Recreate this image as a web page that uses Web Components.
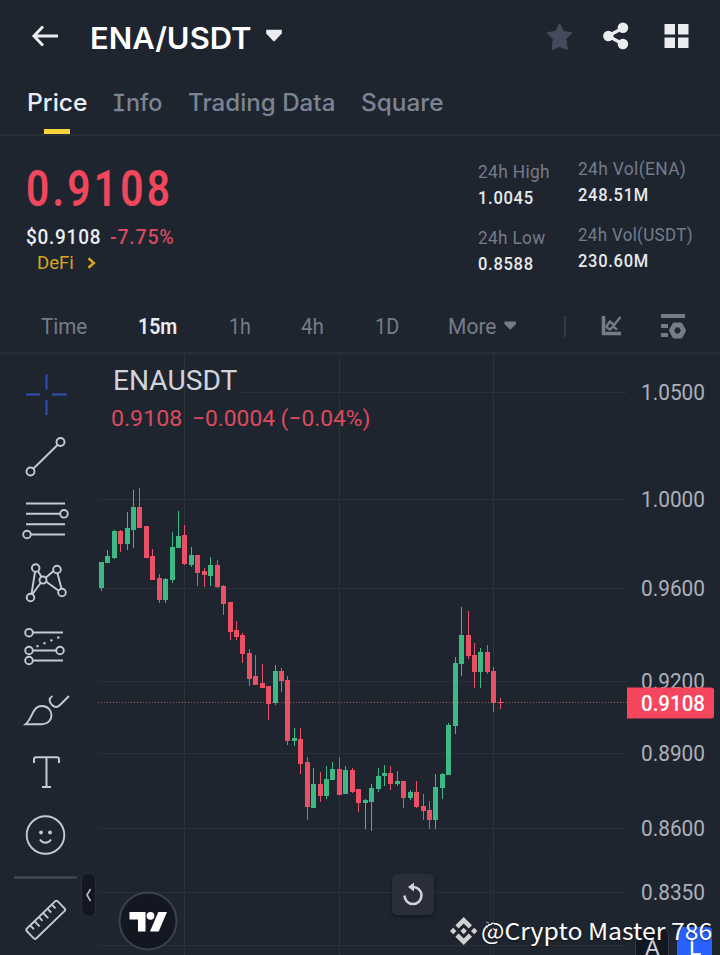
<!DOCTYPE html>
<html lang="en">
<head>
<meta charset="utf-8">
<title>ENA/USDT</title>
<style>
html,body{margin:0;padding:0;background:#1f252f}
body{width:720px;height:955px;overflow:hidden;font-family:Roboto,"Liberation Sans",sans-serif}
</style>
</head>
<body>
<trade-page></trade-page>
<script>
const define = (name, html, init) => {
  const tpl = document.createElement('template');
  tpl.innerHTML = html;
  customElements.define(name, class extends HTMLElement {
    constructor() {
      super();
      this.attachShadow({mode: 'open'}).appendChild(tpl.content.cloneNode(true));
    }
    connectedCallback() { if (init) init(this, this.shadowRoot); }
  });
};

/* One line of text, condensed or widened to the given width. */
define('fit-text', `<style>
:host{display:block;white-space:nowrap;line-height:26px}
span{display:inline-block;transform-origin:0 50%}
</style><span><slot></slot></span>`, (host, root) => {
  const w = +host.getAttribute('w');
  host.style.width = w + 'px';
  host.style.fontSize = host.getAttribute('size') + 'px';
  const span = root.querySelector('span');
  span.style.transform = `scaleX(${w / span.offsetWidth})`;
});

define('page-header', `<style>
:host{display:grid;grid-template-columns:59px 174px 280px 57px 61px 1fr;height:75px;align-items:center;padding-left:31px;box-sizing:border-box}
fit-text{color:#fff;font-family:Inter,sans-serif;font-weight:600}
svg{display:block;margin-bottom:3px}
.caret{margin:0 0 3px}
</style>
<svg width="28" height="24" viewBox="0 0 28 24" fill="none" stroke="#eaecef" stroke-width="3"><path d="M12 2.5L3 12l9 9.5M2.5 12H27"/></svg>
<fit-text size="29.600" w="162">ENA/USDT</fit-text>
<svg class="caret" width="20" height="16" viewBox="0 0 20 16"><path d="M2.200 1.800h15.600v3.600L11 12.800q-1 1-2 0L2.200 5.400z" fill="#eaecef"/></svg>
<svg width="30" height="28" viewBox="0 0 30 28"><path d="M15 2.200l3.500 7.300 8 1-5.900 5.600 1.500 10.100L15 23.200 7.900 26.200l1.500-10.100L3.500 10.500l8-1z" transform="translate(.6 .6)" fill="#434c5b" stroke="#434c5b" stroke-width="2" stroke-linejoin="round"/></svg>
<svg width="32" height="30" viewBox="0 0 32 30" fill="#eaecef"><path d="M22 7L7 15l15 8" fill="none" stroke="#eaecef" stroke-width="3.200"/><circle cx="7.300" cy="15" r="5.200"/><circle cx="21.900" cy="6.800" r="5.300"/><circle cx="21.900" cy="23" r="5.300"/></svg>
<svg width="28" height="28" viewBox="0 0 28 28" fill="#eaecef"><path d="M2.500 2H13v10.500H2.500zM16 2h10.500v10.500H16zM2.500 15.500H13V26H2.500zM16 15.500h10.500V26H16z"/></svg>
`);

define('tab-item', `<style>
:host{display:flex;flex-direction:column;align-items:center;color:#7c8493;height:59px;font-family:Inter,sans-serif;font-weight:500}
:host([active]){color:#eaecef}
::slotted(*){line-height:55px!important}
i{width:26px;height:5px;flex:none;margin-top:-1px}
:host([active]) i{background:#f8d33a}
</style><slot></slot><i></i>`);

define('page-tabs', `<style>
:host{display:flex;box-sizing:border-box;height:61px;border-bottom:2px solid #2a3039;padding-left:26.500px;gap:26px}
.serif{font-family:"DejaVu Sans Mono",monospace;font-weight:400;-webkit-text-stroke:.35px currentColor;margin-left:-1px}
</style>
<tab-item active><fit-text size="23.800" w="60">Price</fit-text></tab-item>
<tab-item><fit-text size="23.800" w="49"><span class="serif">I</span>nfo</fit-text></tab-item>
<tab-item><fit-text size="23.800" w="147">Trading Data</fit-text></tab-item>
<tab-item><fit-text size="23.800" w="83">Square</fit-text></tab-item>
`);

define('stat-cell', `<style>
:host{display:block;height:66px;color:#e6e8eb;font-weight:500;letter-spacing:.05em}
::slotted(:first-child){color:#747c8a;font-weight:400;letter-spacing:.02em}
</style><slot></slot>`);

define('quote-panel', `<style>
:host{display:grid;grid-template-columns:451px 100px 1fr;height:165px;padding-left:27px;box-sizing:border-box}
.left{padding-top:21px}
.price{line-height:65px;color:#f0475d;font-weight:600;letter-spacing:.08em;margin-left:-1px}
.row{display:flex;gap:9px;font-weight:500;color:#eaecef;margin:2px 0 0 -1px;letter-spacing:.05em}
.red{color:#d9495f}
.tag{display:flex;align-items:center;gap:13px;color:#d9a521;padding-left:10px}
.stats{padding-top:22.500px}.b{padding-top:19.500px}
</style>
<div class="left">
<fit-text class="price" size="49.500" w="147">0.9108</fit-text>
<div class="row"><fit-text size="20.500" w="75">$0.9108</fit-text><fit-text class="red" size="20.500" w="65">-7.75%</fit-text></div>
<div class="tag"><fit-text size="18.600" w="37">DeFi</fit-text><svg width="9" height="14" viewBox="0 0 9 14"><path d="M1.500 2.300L6.800 7l-5.300 4.700" fill="none" stroke="#d9a521" stroke-width="2.500"/></svg></div>
</div>
<div class="stats">
<stat-cell><fit-text size="19" w="72">24h High</fit-text><fit-text size="18.600" w="56">1.0045</fit-text></stat-cell>
<stat-cell><fit-text size="19" w="68">24h Low</fit-text><fit-text size="18.600" w="56">0.8588</fit-text></stat-cell>
</div>
<div class="stats b">
<stat-cell><fit-text size="19" w="108">24h Vol(ENA)</fit-text><fit-text size="18.600" w="71">248.51M</fit-text></stat-cell>
<stat-cell><fit-text size="19" w="115">24h Vol(USDT)</fit-text><fit-text size="18.600" w="71">230.60M</fit-text></stat-cell>
</div>`);

define('interval-bar', `<style>
:host{display:grid;grid-template-columns:97px 91px 72px 74px 73px 56px 60px 37px 59px 1fr;align-items:center;height:54px;padding-left:41px;box-sizing:border-box;border-bottom:3px solid #262c36;color:#747c8a}
svg{display:block}
.on{color:#eaecef;font-weight:600}
hr{width:2px;height:21px;border:0;background:#333b47;margin:0}
</style>
<fit-text size="21.500" w="46">Time</fit-text>
<fit-text class="on" size="21.500" w="39">15m</fit-text>
<fit-text size="21.500" w="22">1h</fit-text>
<fit-text size="21.500" w="23">4h</fit-text>
<fit-text size="21.500" w="24">1D</fit-text>
<fit-text size="21.500" w="49">More</fit-text>
<svg width="14" height="12" viewBox="0 0 14 12"><path d="M.500 .500h11.500v2.500L7 8q-.8.800-1.600 0L.500 3z" fill="#747c8a"/></svg>
<hr>
<svg width="22" height="24" viewBox="0 0 22 24" fill="none" stroke="#747c8a"><path d="M2.500 1v17.500H20" stroke-width="3.500"/><path d="M5 12l4-5.500 4 3.500 6.500-8M5 12l4 2.500 3-3 4 3" stroke-width="2.300"/></svg>
<svg width="28" height="28" viewBox="0 0 28 28"><path d="M1 1h24v4H1zM1 11h7v4H1zM1 20h7v4H1z" fill="#747c8a"/><path d="M14.500 12h6l3 5.500-3 5.500h-6l-3-5.500z" fill="none" stroke="#747c8a" stroke-width="4.800" stroke-linejoin="round"/></svg>
`);

define('draw-toolbar', `<style>
:host{display:block;position:relative}
svg{display:block}
.handle{position:absolute;left:81px;top:518px;width:15px;height:44px;border-radius:7px;background:#131722;border:1px solid #292e38;box-sizing:border-box;display:grid;place-items:center}
</style>
<svg width="98" height="600" viewBox="0 355 98 600" fill="none" stroke="#c5c9d3" stroke-width="1.900">
<path d="M46.500 374.500v15M46.500 400v15M26 394.500h14M52 394.500h15" stroke="#3151b5"/>
<path d="M33.500 468.500L57.500 445"/><circle cx="60.500" cy="442" r="4"/><circle cx="30.500" cy="471.500" r="4"/>
<path d="M26 503.500h39M26 513.800h34M26 524.300h39M31 534.500h34"/><circle cx="64" cy="513.800" r="3.800"/><circle cx="27" cy="534.500" r="3.800"/>
<path d="M31.500 594L35 572M32.500 594L41 582.500M38 571l3.500 6M46 577.500L53.500 571M57.500 573.500l4 15M46 581.500L59 591"/>
<circle cx="35.700" cy="568" r="3.800"/><circle cx="57" cy="569.500" r="3.800"/><circle cx="43" cy="580" r="3.500"/><circle cx="62" cy="592.500" r="3.800"/><circle cx="30.500" cy="597.500" r="3.800"/>
<path d="M33 632.500h30M33 650.500h23M33 660.500h30"/><path d="M36.500 646.500L62 636" stroke-width="2.200" stroke-dasharray="2.200 5.300"/>
<circle cx="29" cy="632.700" r="3.800"/><circle cx="29" cy="650.500" r="3.800"/><circle cx="60" cy="650.500" r="3.800"/><circle cx="29" cy="660.500" r="3.800"/>
<path d="M25.500 724.200C33 718 32 706 42 706c6 0 9.500 4.500 9.500 9.200 0 5-4 9-9.500 9zM52.500 696c-4 2.500-3.500 5.500-.5 9 3.300 3.300 6 2 8 0l9-9"/>
<path d="M34 763v-3.500q0-2.200 2.200-2.200h20.600q2.200 0 2.200 2.200v3.500M46.500 757.500v29M42 787h9" stroke-width="2"/>
<circle cx="45.500" cy="835" r="18.800"/><path d="M40 839.500c2.500 4.300 8.500 4.300 11 0"/><g fill="#c5c9d3" stroke="none"><circle cx="41" cy="832.500" r="1.900"/><circle cx="50" cy="832.500" r="1.900"/></g>
<path d="M14 877.500h63" stroke="#434855" stroke-width="2.300"/>
<g transform="translate(45.700 919.800) rotate(-44)"><rect x="-21.500" y="-6.800" width="43" height="13.600" rx="2"/><path d="M-15-6.500v5M-9-6.500v7M-3-6.500v5M3-6.500v7M9-6.500v5M15-6.500v5"/></g>
</svg>
<div class="handle"><svg width="7" height="14" viewBox="0 0 7 14"><path d="M5.500 1L2 7l3.500 6" fill="none" stroke="#b2b5be" stroke-width="1.700"/></svg></div>
`);

/* Each candle: direction, body top, body bottom, wick top, wick bottom. */
const candles = `G562,588,562,591 G556,563,550,563 G531,558,530,559 R531,544,530,552 G528,544,512,550 G507,530,490,548 R507,528,488,528 R526,558,526,558 R556,580,549,580 R578,600,574,603 G579,600,578,603 G547,580,532,583 G536,548,511,548 R535,564,525,565 G555,565,547,567 R555,573,555,586 R571,575,568,587 G565,576,557,586 R565,587,560,588 R586,604,585,615 R602,632,602,640 R630,637,621,640 R635,654,633,663 R653,679,649,686 R676,685,655,685 R683,688,664,688 R686,704,686,720 G671,703,665,705 R671,681,668,692 R680,741,676,745 G738,741,728,746 R739,764,728,774 R762,807,757,820 G784,808,768,808 R784,796,772,802 G779,796,766,799 G769,780,762,780 R769,795,757,795 G770,794,766,794 R770,792,768,793 R789,803,789,812 G800,803,799,829 G788,802,784,831 G776,789,768,792 G773,776,765,786 R773,784,766,790 G781,784,771,786 R781,798,781,808 G792,798,790,800 R792,807,781,808 R806,811,794,820 R810,820,801,829 G787,820,774,829 G774,788,773,799 G725,775,723,775 G663,726,657,734 G635,664,607,676 R635,656,611,659 R655,672,643,688 G652,672,648,688 R652,672,645,674 R671,703,667,712 R702,703,698,709`;

define('price-plot', `<style>
:host{display:block;position:relative}
#plot{display:block}
.legend{position:absolute;left:15px;top:11px;color:#d1d4dc}
.row{display:flex;gap:10px;margin-top:9px;color:#dc4a5e}
.reset{position:absolute;left:294px;top:519px;width:42px;height:41px;border-radius:5px;background:#2a2e39;box-shadow:0 2px 4px #0006;display:grid;place-items:center}
.logo{position:absolute;left:20px;top:536px}
</style>
<svg id="plot" width="529" height="600" viewBox="98 355 529 600" shape-rendering="crispEdges"></svg>
<div class="legend"><fit-text size="27.700" w="124" style="line-height:30px">ENAUSDT</fit-text>
<div class="row"><fit-text size="22.500" w="71" style="margin-left:-2px">0.9108</fit-text><fit-text size="22.500" w="178">−0.0004 (−0.04%)</fit-text></div></div>
<div class="reset"><svg width="24" height="26" viewBox="0 0 24 26"><path d="M3.500 13.500a8.500 8.500 0 1 0 8.500-8.500" fill="none" stroke="#d1d4dc" stroke-width="2.500"/><path d="M13 .5v9L7 5z" fill="#d1d4dc"/></svg></div>
<svg class="logo" width="60" height="60" viewBox="0 0 60 60"><circle cx="30" cy="30" r="28.500" fill="#131722" stroke="#3e424d" stroke-width="2"/><g fill="#fff"><path d="M11.500 21h16v19.500H20v-12h-8.500z"/><circle cx="32.500" cy="24.800" r="3.900"/><path d="M40.300 21h8.700l-8.300 19.500H32z"/></g></svg>
`, (host, root) => {
  let s = '';
  for (const x of [184, 339, 493]) s += `<rect x="${x}" y="355" width="1" height="600" fill="#2b313b"/>`;
  s += '<rect x="490" y="850" width="1" height="105" fill="#262c36"/>';
  for (const y of [392, 499, 588, 681, 753, 828, 892, 945]) {
    const x = y === 392 ? 240 : 98;
    s += `<rect x="${x}" y="${y}" width="${627 - x}" height="1" fill="#2a303a"/>`;
  }
  s += '<path d="M98 702.500H627" stroke="#b54a5c" stroke-dasharray="1 2"/>';
  candles.split(' ').forEach((c, i) => {
    const [t, b, wt, wb] = c.slice(1).split(',').map(Number);
    const x = Math.floor(101.3 + 6.435 * i);
    s += `<g fill="${c[0] === 'G' ? '#3db985' : '#eb5166'}"><rect x="${x}" y="${wt}" width="1" height="${wb - wt}"/><rect x="${x - 2}" y="${t}" width="5" height="${b - t}"/></g>`;
  });
  root.getElementById('plot').innerHTML = s;
});

define('price-axis', `<style>
:host{display:block}
svg{display:block}
text{font:21.800px Roboto,sans-serif;fill:#adb0ba}
</style><svg width="93" height="600" viewBox="627 355 93 600"></svg>`, (host, root) => {
  const label = (y, v, extra = '') => `<text x="641" y="${y}" textLength="64" lengthAdjust="spacingAndGlyphs" ${extra}>${v}</text>`;
  root.querySelector('svg').innerHTML =
    [[400, '1.0500'], [506.500, '1.0000'], [595.800, '0.9600'], [689, '0.9200'], [760.700, '0.8900'], [836, '0.8600'], [899.700, '0.8350']].map(a => label(...a)).join('') +
    '<path d="M627 687.500h84q3 0 3 3V715.500q0 3-3 3H627z" fill="#f6465d"/>' +
    label(710.700, '0.9108', 'style="fill:#fff;font-weight:500"') +
    '<rect x="635.500" y="929.500" width="33" height="40" rx="4" fill="#131722" stroke="#363a45"/><rect x="677" y="927" width="35" height="40" rx="4" fill="#2962ff"/>' +
    '<text x="645" y="954.500" style="font-size:22.500px;fill:#d1d4dc">A</text><text x="689" y="954.500" style="font-size:22.500px;fill:#fff">L</text>';
});

define('author-mark', `<style>
:host{position:absolute;left:449px;top:914px;display:flex;align-items:center;gap:3px;color:#fff;font-family:"Noto Sans CJK SC",sans-serif}
fit-text{line-height:32px;text-shadow:0 1px 2px #0008}
svg{display:block}
.noise{position:absolute;left:34px;top:6px}
</style>
<svg width="29" height="32" viewBox="0 0 29 32" fill="#d0d1d3"><path d="M14.700 3l8.300 8.300-3.200 3.200-5.100-5.100-5.100 5.100-3.200-3.200zM14.700 31l8.300-8.300-3.200-3.200-5.100 5.100-5.100-5.100-3.200 3.200zM1 17l3.200-3.200L7.400 17l-3.200 3.200zM11.500 17l3.200-3.200 3.200 3.200-3.200 3.200zM22 17l3.200-3.200 3.200 3.200-3.200 3.200z"/></svg>
<fit-text size="23.500" w="231">@Crypto Master 786</fit-text>
<svg class="noise" width="14" height="16" viewBox="0 0 14 16"><path d="M2 3l3 2M7 1v3M11 4l-3 2M3 9l4-2M9 9l3 3M4 13l2-3" stroke="#252a32" stroke-width="1.500"/><path d="M3 2l3 1M8 3l3 0M2 7l3 1" stroke="#c7c8ca" stroke-width=".8"/></svg>
`);

define('chart-area', `<style>
:host{display:grid;grid-template-columns:98px 529px 93px;height:600px}
</style><draw-toolbar></draw-toolbar><price-plot></price-plot><price-axis></price-axis>`);

define('trade-page', `<style>
:host{display:block;position:relative;width:720px;height:955px;overflow:hidden;background:#1f252f}
</style>
<page-header></page-header><page-tabs></page-tabs><quote-panel></quote-panel><interval-bar></interval-bar><chart-area></chart-area><author-mark></author-mark>`);
</script>
</body>
</html>
